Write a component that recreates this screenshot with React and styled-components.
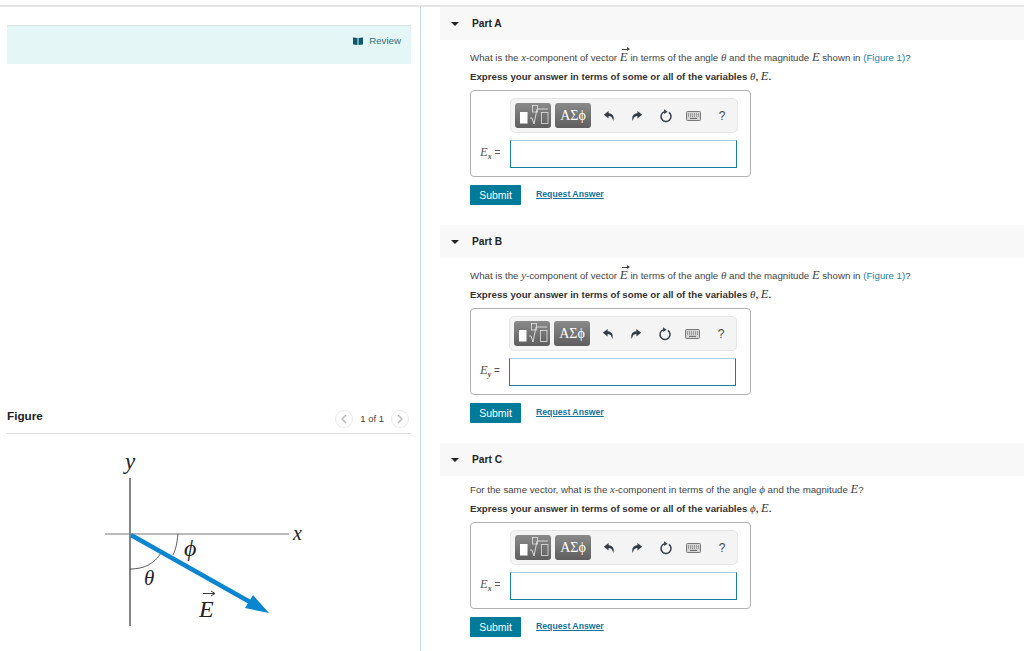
import styled, { createGlobalStyle } from "styled-components";

const parts = [
	{
		name: "Part A",
		sub: "x",
		kind: "vector",
		symbol: "θ",
		component: "x",
	},
	{
		name: "Part B",
		sub: "y",
		kind: "vector",
		symbol: "θ",
		component: "y",
		shift: true,
	},
	{
		name: "Part C",
		sub: "x",
		kind: "same",
		symbol: "ϕ",
		component: "x",
	},
];

function TemplateIcon() {
	return (
		<svg width="36" height="25" viewBox="0 0 36 25" fill="none">
			<rect x="5" y="9" width="7.500" height="11.500" fill="#fff" />
			<rect x="17.500" y="2.500" width="5" height="6.500" stroke="#e2e2e2" strokeWidth="0.8" />
			<path d="M15 15l2 0 2 6 3-15h11" stroke="#e2e2e2" strokeWidth="0.9" />
			<rect x="26.500" y="9.500" width="6.500" height="11" stroke="#e2e2e2" strokeWidth="0.8" />
		</svg>
	);
}

function UndoIcon({ flip }) {
	return (
		<svg
			width="12"
			height="12"
			viewBox="0 0 12 12"
			style={flip ? { transform: "scaleX(-1)" } : undefined}
		>
			<path
				d="M5.6 1L0.8 4.8l4.800 3.700V6c2 0 3.300 0.800 4 3 .5 1 .6 1.600.7 2 1-3.400.5-7.300-4.700-7.800z"
				fill="#333c44"
			/>
		</svg>
	);
}

function ResetIcon() {
	return (
		<svg width="14" height="14" viewBox="0 0 14 14" fill="none">
			<path
				d="M9.800 3.300a5 5 0 1 1-4.800-.4"
				stroke="#333c44"
				strokeWidth="1.500"
			/>
			<path d="M5 0.300l3.600 2.400-3.400 2.400z" fill="#333c44" />
		</svg>
	);
}

function KeyboardIcon() {
	return (
		<svg width="15" height="10" viewBox="0 0 15 10">
			<rect x="0.5" y="0.5" width="14" height="9" rx="1" fill="#d5d5d5" stroke="#777" />
			<path
				d="M2 3h11M2 5h11"
				stroke="#666"
				strokeWidth="1"
				strokeDasharray="1 1"
			/>
			<path d="M4 7.400h7" stroke="#666" strokeWidth="1" />
		</svg>
	);
}

function BookIcon() {
	return (
		<svg width="10" height="8" viewBox="0 0 10 8">
			<path d="M0 0.500l4.500 0.500v7L0 7.500zM10 0.500L5.500 1v7l4.500-.5z" fill="#0b5a72" />
		</svg>
	);
}

function FigureDrawing() {
	return (
		<FigureSvg width="230" height="190" viewBox="0 0 230 190">
			<line x1="40" y1="33" x2="40" y2="181" stroke="#222" strokeWidth="1.100" />
			<line x1="15" y1="89" x2="199" y2="89" stroke="#777" strokeWidth="1.200" />
			<path d="M40 124 C 54 124 64 119 71 108" fill="none" stroke="#333" strokeWidth="0.8" />
			<path d="M88 89 C 87 98 86 104 83 110" fill="none" stroke="#333" strokeWidth="0.8" />
			<line x1="41" y1="90" x2="160" y2="157" stroke="#0a85cf" strokeWidth="4.500" />
			<path d="M179 168 L155 163 L163 150 Z" fill="#0a85cf" />
			<FigureLabel x="35" y="24" fontSize="23">y</FigureLabel>
			<FigureLabel x="203" y="95" fontSize="20">x</FigureLabel>
			<FigureLabel x="94" y="111" fontSize="24">ϕ</FigureLabel>
			<FigureLabel x="54" y="140" fontSize="21">θ</FigureLabel>
			<FigureLabel x="109" y="172" fontSize="24">E</FigureLabel>
			<path d="M113 148.500 H124 M121 146 L125 148.500 L121 151" fill="none" stroke="#222" strokeWidth="0.9" />
		</FigureSvg>
	);
}

function Question({ part }) {
	if (part.kind === "same") {
		return (
			<QuestionText>
				For the same vector, what is the <MathVar>x</MathVar>-component in terms of the angle{" "}
				<MathVar>ϕ</MathVar> and the magnitude <MathVar $big>E</MathVar>?
			</QuestionText>
		);
	}
	return (
		<QuestionText $tall>
			What is the <MathVar>{part.component}</MathVar>-component of vector{" "}
			<Vec>
				<MathVar $huge>E</MathVar>
			</Vec>{" "}
			in terms of the angle <MathVar>θ</MathVar> and the magnitude <MathVar $big>E</MathVar> shown in{" "}
			<FigureLink>(Figure 1)</FigureLink>?
		</QuestionText>
	);
}

function PartSection({ part }) {
	return (
		<Section>
			<PartHeader>
				<Caret />
				<PartTitle>{part.name}</PartTitle>
			</PartHeader>
			<PartBody>
				<Question part={part} />
				<Instruction>
					Express your answer in terms of some or all of the variables{" "}
					<MathVar>{part.symbol}</MathVar>, <MathVar $big>E</MathVar>.
				</Instruction>
				<AnswerBox>
					<ToolRow>
						<Toolbar $shift={part.shift}>
							<ToolButton>
								<TemplateIcon />
							</ToolButton>
							<ToolButton>ΑΣϕ</ToolButton>
							<ToolIcons>
								<ToolIcon>
									<UndoIcon />
								</ToolIcon>
								<ToolIcon>
									<UndoIcon flip />
								</ToolIcon>
								<ToolIcon>
									<ResetIcon />
								</ToolIcon>
								<ToolIcon>
									<KeyboardIcon />
								</ToolIcon>
								<ToolIcon $help>?</ToolIcon>
							</ToolIcons>
						</Toolbar>
					</ToolRow>
					<InputRow>
						<AnswerLabel>
							<MathVar $big>E</MathVar>
							<Sub>{part.sub}</Sub> =
						</AnswerLabel>
						<AnswerInput $shift={part.shift} />
					</InputRow>
				</AnswerBox>
				<Actions>
					<SubmitButton>Submit</SubmitButton>
					<RequestLink>Request Answer</RequestLink>
				</Actions>
			</PartBody>
		</Section>
	);
}

export default function App() {
	return (
		<>
			<GlobalStyle />
			<Page>
				<Columns>
					<LeftColumn>
						<ReviewBar>
							<BookIcon />
							<ReviewText>Review</ReviewText>
						</ReviewBar>
						<FigureHeader>
							<FigureTitle>Figure</FigureTitle>
							<Pager>
								<PagerButton>
									<svg width="8" height="10" viewBox="0 0 8 10" fill="none">
										<path d="M6 1L2 5l4 4" stroke="#bbb" strokeWidth="1.500" />
									</svg>
								</PagerButton>
								<PagerText>1 of 1</PagerText>
								<PagerButton>
									<svg width="8" height="10" viewBox="0 0 8 10" fill="none">
										<path d="M2 1l4 4-4 4" stroke="#bbb" strokeWidth="1.500" />
									</svg>
								</PagerButton>
							</Pager>
						</FigureHeader>
						<FigureDrawing />
					</LeftColumn>
					<RightColumn>
						{parts.map((part) => (
							<PartSection key={part.name} part={part} />
						))}
					</RightColumn>
				</Columns>
			</Page>
		</>
	);
}

const GlobalStyle = createGlobalStyle`
	html, body {
		margin: 0;
		padding: 0;
		background: #ffffff;
	}
	* {
		box-sizing: border-box;
	}
`;

const Page = styled.div`
	width: 1024px;
	height: 651px;
	padding-top: 5px;
	overflow: hidden;
	font-family: "Liberation Sans", Arial, sans-serif;
	color: #333333;
`;

const Columns = styled.div`
	display: grid;
	grid-template-columns: 421px 1fr;
	height: 646px;
	border-top: 2px solid #e4e4e4;
`;

const LeftColumn = styled.div`
	border-right: 1px solid #c8d8e8;
	padding: 18px 9px 0 7px;
`;

const ReviewBar = styled.div`
	display: flex;
	align-items: center;
	justify-content: flex-end;
	gap: 6px;
	height: 39px;
	padding: 0 10px 9px 0;
	background: #e5f6f6;
	border-top: 1px solid #d8e2e2;
`;

const ReviewText = styled.span`
	font-size: 9.700px;
	color: #2d6f86;
`;

const FigureHeader = styled.div`
	display: flex;
	align-items: center;
	justify-content: space-between;
	height: 30px;
	margin-top: 340px;
	padding-bottom: 6px;
	border-bottom: 1px solid #dddddd;
`;

const FigureTitle = styled.span`
	font-size: 11.700px;
	font-weight: 700;
	color: #222222;
`;

const Pager = styled.div`
	display: flex;
	align-items: center;
	gap: 7px;
	margin-top: 6px;
	padding-right: 2px;
`;

const PagerButton = styled.span`
	display: flex;
	align-items: center;
	justify-content: center;
	width: 18px;
	height: 18px;
	border: 1px solid #e8e8e8;
	border-radius: 50%;
`;

const PagerText = styled.span`
	font-size: 9.500px;
	color: #444444;
`;

const FigureSvg = styled.svg`
	display: block;
	margin: 11px 0 0 83px;
`;

const FigureLabel = styled.text`
	font-family: "Liberation Serif", serif;
	font-style: italic;
	fill: #222222;
`;

const RightColumn = styled.div`
	padding-left: 19px;
`;

const Section = styled.section`
	margin-bottom: 0;
`;

const PartHeader = styled.div`
	display: flex;
	align-items: center;
	height: 33px;
	background: #f8f8f8;
`;

const Caret = styled.span`
	width: 0;
	height: 0;
	margin-left: 11px;
	border-left: 4px solid transparent;
	border-right: 4px solid transparent;
	border-top: 4px solid #222222;
`;

const PartTitle = styled.h3`
	margin: 0 0 0 13px;
	font-size: 10.200px;
	font-weight: 700;
	color: #222222;
`;

const PartBody = styled.div`
	height: 185px;
	padding: 6px 0 0 30px;
`;

const QuestionText = styled.p`
	margin: 0 0 ${(p) => (p.$tall ? "0" : "4px")};
	font-size: 9.700px;
	line-height: ${(p) => (p.$tall ? "22px" : "14px")};
	color: #444444;
	white-space: nowrap;
`;

const Instruction = styled.p`
	margin: 0 0 6px;
	font-size: 9.700px;
	font-weight: 700;
	line-height: 14px;
	color: #333333;
	white-space: nowrap;
`;

const MathVar = styled.i`
	font-family: "Liberation Serif", serif;
	font-size: ${(p) => (p.$huge ? "13px" : p.$big ? "12.500px" : "11px")};
	font-weight: 400;
`;

const Vec = styled.span`
	position: relative;
	display: inline-block;
	&::before {
		content: "";
		position: absolute;
		top: 3px;
		left: 2px;
		width: 7px;
		border-top: 1px solid #444444;
	}
	&::after {
		content: "";
		position: absolute;
		top: 1px;
		left: 7px;
		border-left: 3px solid #444444;
		border-top: 2px solid transparent;
		border-bottom: 2px solid transparent;
	}
`;

const FigureLink = styled.span`
	color: #1f7f9f;
`;

const AnswerBox = styled.div`
	width: 281px;
	height: 87px;
	padding: 7px 12px 0 39px;
	border: 1px solid #b0b0b0;
	border-radius: 4px;
`;

const ToolRow = styled.div`
	display: flex;
`;

const Toolbar = styled.div`
	display: flex;
	align-items: center;
	gap: 4px;
	flex: none;
	width: 228px;
	height: 35px;
	padding-left: 4px;
	margin-left: ${(p) => (p.$shift ? "-1px" : "0")};
	background: #f4f4f4;
	border: 1px solid #e6e6e6;
	border-radius: 5px;
`;

const ToolButton = styled.span`
	display: flex;
	flex: none;
	align-items: center;
	justify-content: center;
	width: 36px;
	height: 25px;
	background: linear-gradient(#8a8a8a, #5e5e5e);
	border-radius: 3px;
	font-family: "Liberation Serif", serif;
	font-size: 14px;
	color: #ffffff;
`;

const ToolIcons = styled.div`
	display: flex;
	flex: none;
	align-items: center;
`;

const ToolIcon = styled.span`
	display: flex;
	align-items: center;
	justify-content: center;
	width: 28.250px;
	font-size: ${(p) => (p.$help ? "12px" : "10px")};
	color: #444444;
`;

const InputRow = styled.div`
	display: flex;
	align-items: center;
	margin-top: 7px;
	margin-left: -30px;
`;

const AnswerLabel = styled.span`
	width: 30px;
	padding-bottom: 3px;
	font-size: 10px;
	color: #555555;
	white-space: nowrap;
`;

const Sub = styled.sub`
	font-family: "Liberation Serif", serif;
	font-style: italic;
	font-weight: 700;
	font-size: 8px;
	line-height: 0;
`;

const AnswerInput = styled.input`
	width: 227px;
	height: 28px;
	margin-left: ${(p) => (p.$shift ? "-1px" : "0")};
	border: 1px solid #1b7f9c;
	border-top-color: #a8d0dc;
	background: #ffffff;
	outline: none;
`;

const Actions = styled.div`
	display: flex;
	align-items: center;
	gap: 15px;
	margin-top: 8px;
`;

const SubmitButton = styled.button`
	width: 51px;
	height: 20px;
	padding: 0;
	border: none;
	border-radius: 1px;
	background: #007b99;
	color: #ffffff;
	font-family: "Liberation Sans", Arial, sans-serif;
	font-size: 10.500px;
`;

const RequestLink = styled.a`
	margin-top: -2px;
	font-size: 8.700px;
	font-weight: 700;
	color: #13759b;
	text-decoration: underline;
`;
